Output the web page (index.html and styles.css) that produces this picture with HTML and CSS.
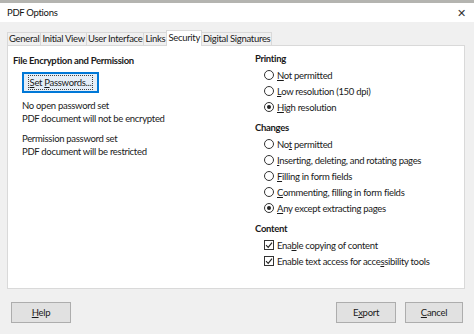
FILE: index.html
```html
<!DOCTYPE html>
<html lang="en">
<head>
    <meta charset="UTF-8">
    <title>PDF Options</title>
    <link rel="stylesheet" href="styles.css">
</head>
<body>
    <div class="window">
        <div class="titlebar">
            <span class="title">PDF Options</span>
            <span class="close">&#x2715;</span>
        </div>

        <div class="content">
            <div class="tabs">
                <span class="tab">General</span>
                <span class="tab">Initial View</span>
                <span class="tab">User Interface</span>
                <span class="tab">Links</span>
                <span class="tab active">Security</span>
                <span class="tab">Digital Signatures</span>
            </div>

            <div class="panel">
                <div class="col left">
                    <h3>File Encryption and Permission</h3>
                    <button class="btn set-pw"><span class="focus"><u>S</u>et <u>P</u>asswords...</span></button>
                    <p class="note">No open password set<br>PDF document will not be encrypted</p>
                    <p class="note">Permission password set<br>PDF document will be restricted</p>
                </div>

                <div class="col right">
                    <h3>Printing</h3>
                    <label class="opt"><span class="radio"></span><span><u>N</u>ot permitted</span></label>
                    <label class="opt"><span class="radio"></span><span><u>L</u>ow resolution (150 dpi)</span></label>
                    <label class="opt"><span class="radio on"></span><span><u>H</u>igh resolution</span></label>

                    <h3>Changes</h3>
                    <label class="opt"><span class="radio"></span><span>No<u>t</u> permitted</span></label>
                    <label class="opt"><span class="radio"></span><span><u>I</u>nserting, deleting, and rotating pages</span></label>
                    <label class="opt"><span class="radio"></span><span><u>F</u>illing in form fields</span></label>
                    <label class="opt"><span class="radio"></span><span><u>C</u>ommenting, filling in form fields</span></label>
                    <label class="opt"><span class="radio on"></span><span><u>A</u>ny except extracting pages</span></label>

                    <h3>Content</h3>
                    <label class="opt"><span class="check"><svg viewBox="0 0 8 8" width="8" height="8"><path d="M1 4.2 L3.2 6.4 L7 1.6" fill="none" stroke="#222" stroke-width="1.1"/></svg></span><span>Ena<u>b</u>le copying of content</span></label>
                    <label class="opt"><span class="check"><svg viewBox="0 0 8 8" width="8" height="8"><path d="M1 4.2 L3.2 6.4 L7 1.6" fill="none" stroke="#222" stroke-width="1.1"/></svg></span><span>Enable text access for acce<u>s</u>sibility tools</span></label>
                </div>
            </div>

            <div class="footer">
                <button class="btn"><u>H</u>elp</button>
                <div class="footer-right">
                    <button class="btn">E<u>x</u>port</button>
                    <button class="btn"><u>C</u>ancel</button>
                </div>
            </div>
        </div>
    </div>
</body>
</html>
```

FILE: styles.css
```css
body {
    margin: 0;
    padding: 0;
    font-family: Lato, sans-serif;
    font-size: 9.5px;
    letter-spacing: -0.3px;
    color: #1a1a1a;
    background-color: #f0f0f0;
}
.window {
    width: 474px;
    height: 334px;
    overflow: hidden;
    background-color: #f0f0f0;
}
.titlebar {
    height: 19px;
    background-color: white;
    border-top: 3px solid #b4b4b0;
    display: flex;
    justify-content: space-between;
    align-items: center;
    padding: 0 8px 0 7px;
}
.title {
    color: #111;
}
.close {
    font-size: 11px;
    color: #333;
}
.content {
    padding: 0 9px 0 7px;
}
.tabs {
    display: flex;
    align-items: flex-end;
    height: 23px;
    white-space: nowrap;
}
.tab {
    height: 12px;
    line-height: 12px;
    padding: 0 1px;
    border: 1px solid #d9d9d9;
    border-bottom: none;
    margin-right: -1px;
    background-color: #f0f0f0;
}
.tab.active {
    height: 14px;
    line-height: 14px;
    background-color: white;
    position: relative;
    z-index: 1;
    margin-bottom: -1px;
    padding-bottom: 1px;
}
.panel {
    height: 242px;
    background-color: white;
    border: 1px solid #d9d9d9;
    display: flex;
    white-space: nowrap;
}
.col.left {
    width: 236px;
    padding: 8px 0 0 5px;
}
.col.right {
    padding: 6px 0 0 6px;
}
h3 {
    margin: 0;
    font-size: 9.5px;
    font-weight: bold;
    line-height: 13px;
}
.note {
    margin: 6px 0 0 9px;
    line-height: 13px;
}
.note + .note {
    margin-top: 7px;
}
.opt {
    display: flex;
    align-items: center;
    height: 16px;
    padding-left: 9px;
}
.right h3 + .opt {
    margin-top: 2px;
}
.right .opt + h3 {
    margin-top: 6px;
}
.radio {
    width: 8px;
    height: 8px;
    border: 1px solid #333;
    border-radius: 50%;
    margin-right: 3px;
    position: relative;
}
.radio.on::after {
    content: "";
    position: absolute;
    left: 2px;
    top: 2px;
    width: 4px;
    height: 4px;
    border-radius: 50%;
    background-color: #222;
}
.check {
    width: 8px;
    height: 8px;
    border: 1px solid #333;
    margin-right: 3px;
    display: flex;
}
.btn {
    font-family: Lato, sans-serif;
    font-size: 9.5px;
    letter-spacing: -0.3px;
    color: #1a1a1a;
    background-color: #e1e1e1;
    border: 1px solid #adadad;
    padding: 0;
    width: 60px;
    height: 21px;
    white-space: nowrap;
}
.btn.set-pw {
    display: block;
    margin: 5px 0 0 9px;
    width: 77px;
    height: 21px;
    background-color: #e5eef7;
    border: 1px solid #0078d7;
    box-shadow: inset 0 0 0 1px #0078d7;
}
.focus {
    padding: 1px 1px;
    outline: 1px dotted #444;
}
.footer {
    display: flex;
    justify-content: space-between;
    padding: 13px 0 0 4px;
}
.footer-right {
    display: flex;
    gap: 9px;
}
.footer-right .btn:last-child {
    width: 58px;
    margin-right: 2px;
}
```
